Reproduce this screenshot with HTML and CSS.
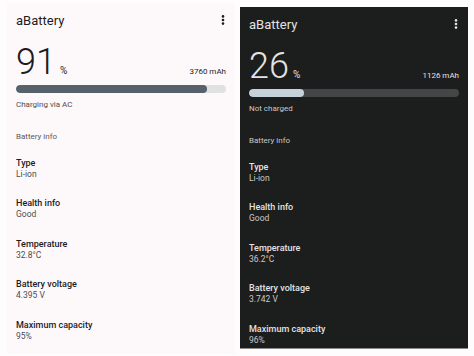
FILE: index.html
```html
<!DOCTYPE html>
<html lang="en">
<head>
  <meta charset="UTF-8">
  <meta name="viewport" content="width=device-width, initial-scale=1.0">
  <title>aBattery</title>
  <link rel="stylesheet" href="styles.css">
</head>
<body>

<div class="screens">

  <div class="phone light">
    <div class="topbar">
      <span class="title">aBattery</span>
      <svg class="menu" width="4" height="10" viewBox="0 0 4 10">
        <circle cx="2" cy="1.4" r="1.3"/>
        <circle cx="2" cy="5" r="1.3"/>
        <circle cx="2" cy="8.6" r="1.3"/>
      </svg>
    </div>
    <div class="level">
      <span class="percent">91</span>
      <span class="unit">%</span>
      <span class="mah">3760 mAh</span>
    </div>
    <div class="bar"><div class="fill" style="width: 91%"></div></div>
    <div class="status">Charging via AC</div>
    <div class="section">Battery info</div>
    <div class="list">
      <div class="item"><div class="label">Type</div><div class="value">Li-ion</div></div>
      <div class="item"><div class="label">Health info</div><div class="value">Good</div></div>
      <div class="item"><div class="label">Temperature</div><div class="value">32.8°C</div></div>
      <div class="item"><div class="label">Battery voltage</div><div class="value">4.395 V</div></div>
      <div class="item"><div class="label">Maximum capacity</div><div class="value">95%</div></div>
    </div>
  </div>

  <div class="phone dark">
    <div class="topbar">
      <span class="title">aBattery</span>
      <svg class="menu" width="4" height="10" viewBox="0 0 4 10">
        <circle cx="2" cy="1.4" r="1.3"/>
        <circle cx="2" cy="5" r="1.3"/>
        <circle cx="2" cy="8.6" r="1.3"/>
      </svg>
    </div>
    <div class="level">
      <span class="percent">26</span>
      <span class="unit">%</span>
      <span class="mah">1126 mAh</span>
    </div>
    <div class="bar"><div class="fill" style="width: 26%"></div></div>
    <div class="status">Not charged</div>
    <div class="section">Battery info</div>
    <div class="list">
      <div class="item"><div class="label">Type</div><div class="value">Li-ion</div></div>
      <div class="item"><div class="label">Health info</div><div class="value">Good</div></div>
      <div class="item"><div class="label">Temperature</div><div class="value">36.2°C</div></div>
      <div class="item"><div class="label">Battery voltage</div><div class="value">3.742 V</div></div>
      <div class="item"><div class="label">Maximum capacity</div><div class="value">96%</div></div>
    </div>
  </div>

</div>

</body>
</html>
```

FILE: styles.css
```css
body {
  margin: 0;
  background: #fefcfd;
  font-family: Roboto, "Noto Sans", sans-serif;
}
.screens {
  display: flex;
  align-items: flex-start;
  gap: 5px;
  padding: 3px 0 0 7px;
}
.phone {
  width: 228px;
  box-sizing: border-box;
  padding: 7px 9px 12px;
}
.light {
  background: #fdf9fb;
  color: #1d1b1e;
}
.dark {
  margin-top: 4px;
  height: 342px;
  background: #1c1d1d;
  color: #e4e3e3;
  border-bottom: 1px solid #8a8a8a;
}
.topbar {
  display: flex;
  align-items: center;
  justify-content: space-between;
  height: 20px;
}
.title {
  font-size: 13px;
}
.menu {
  fill: currentColor;
  margin-right: 1px;
}
.level {
  display: flex;
  align-items: baseline;
  margin-top: 14px;
  height: 36px;
}
.percent {
  font-size: 36px;
  line-height: 36px;
  font-weight: 300;
}
.unit {
  font-size: 10px;
  margin-left: 4px;
}
.mah {
  font-size: 8px;
  margin-left: auto;
}
.bar {
  margin-top: 5px;
  height: 8px;
  border-radius: 4px;
  overflow: hidden;
}
.fill {
  height: 100%;
  border-radius: 4px;
}
.light .bar { background: #e2e1e2; }
.light .fill { background: #56616a; }
.dark .bar { background: #434546; }
.dark .fill { background: #c5d2d9; }
.status {
  margin-top: 6px;
  font-size: 8px;
  line-height: 12px;
}
.section {
  margin-top: 20px;
  font-size: 8px;
  line-height: 12px;
}
.list {
  display: flex;
  flex-direction: column;
  gap: 17.5px;
  margin-top: 13.5px;
}
.label {
  font-size: 9px;
  line-height: 12px;
  font-weight: 500;
}
.value {
  font-size: 8.5px;
  line-height: 11px;
}
.light .section, .light .value, .light .status { color: #4f4c50; }
.dark .section, .dark .value, .dark .status { color: #c9c8c8; }
.light .section { color: #5b585c; }
```
